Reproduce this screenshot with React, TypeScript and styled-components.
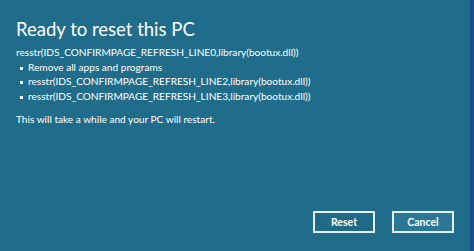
import React from 'react';
import styled, { createGlobalStyle } from 'styled-components';

const GlobalStyle = createGlobalStyle`
  html, body {
    margin: 0;
    padding: 0;
    width: 474px;
    height: 251px;
    overflow: hidden;
    background: #1f6d8b;
  }
`;

const lines = [
  'Remove all apps and programs',
  'resstr(IDS_CONFIRMPAGE_REFRESH_LINE2,library(bootux.dll))',
  'resstr(IDS_CONFIRMPAGE_REFRESH_LINE3,library(bootux.dll))',
];

const App: React.FC = () => {
  return (
    <StyledScreen>
      <GlobalStyle />
      <StyledDialog>
        <Title>Ready to reset this PC</Title>
        <Text>resstr(IDS_CONFIRMPAGE_REFRESH_LINE0,library(bootux.dll))</Text>
        <BulletList>
          {lines.map((line) => (
            <li key={line}>{line}</li>
          ))}
        </BulletList>
        <Text $gap>This will take a while and your PC will restart.</Text>
        <Footer>
          <Button>Reset</Button>
          <Button $light>Cancel</Button>
        </Footer>
      </StyledDialog>
      <EdgeStrip />
    </StyledScreen>
  );
};

export default App;

const StyledScreen = styled.div`
  display: flex;
  width: 474px;
  height: 251px;
  font-family: Lato, 'Noto Sans', sans-serif;
  color: #ffffff;
`;

const StyledDialog = styled.div`
  flex: 1;
  display: flex;
  flex-direction: column;
  padding: 16px 16px 18px 16px;
`;

const EdgeStrip = styled.div`
  width: 4px;
  background: #1c4f8c;
`;

const Title = styled.h1`
  margin: 0 0 3px 0;
  font-size: 18.5px;
  font-weight: 400;
  line-height: 26px;
`;

const Text = styled.p<{ $gap?: boolean }>`
  margin: ${({ $gap }) => ($gap ? '8px 0 0 0' : '0')};
  font-size: 10.1px;
  line-height: 14.7px;
`;

const BulletList = styled.ul`
  margin: 0;
  padding: 0;
  list-style: none;
  font-size: 10.1px;
  line-height: 14.7px;

  li {
    position: relative;
    padding-left: 12px;
  }

  li::before {
    content: '';
    position: absolute;
    left: 4px;
    top: 7px;
    width: 3px;
    height: 3px;
    background: #ffffff;
  }
`;

const Footer = styled.div`
  margin-top: auto;
  display: flex;
  justify-content: flex-end;
  gap: 17px;
`;

const Button = styled.button<{ $light?: boolean }>`
  width: 62px;
  height: 22px;
  box-sizing: border-box;
  border: 2px solid #e6eef2;
  background: ${({ $light }) => ($light ? '#2b7895' : '#1e6a88')};
  color: #ffffff;
  font-family: Lato, 'Noto Sans', sans-serif;
  font-size: 10.5px;
  font-weight: 700;
  padding: 0;
  cursor: pointer;
`;
